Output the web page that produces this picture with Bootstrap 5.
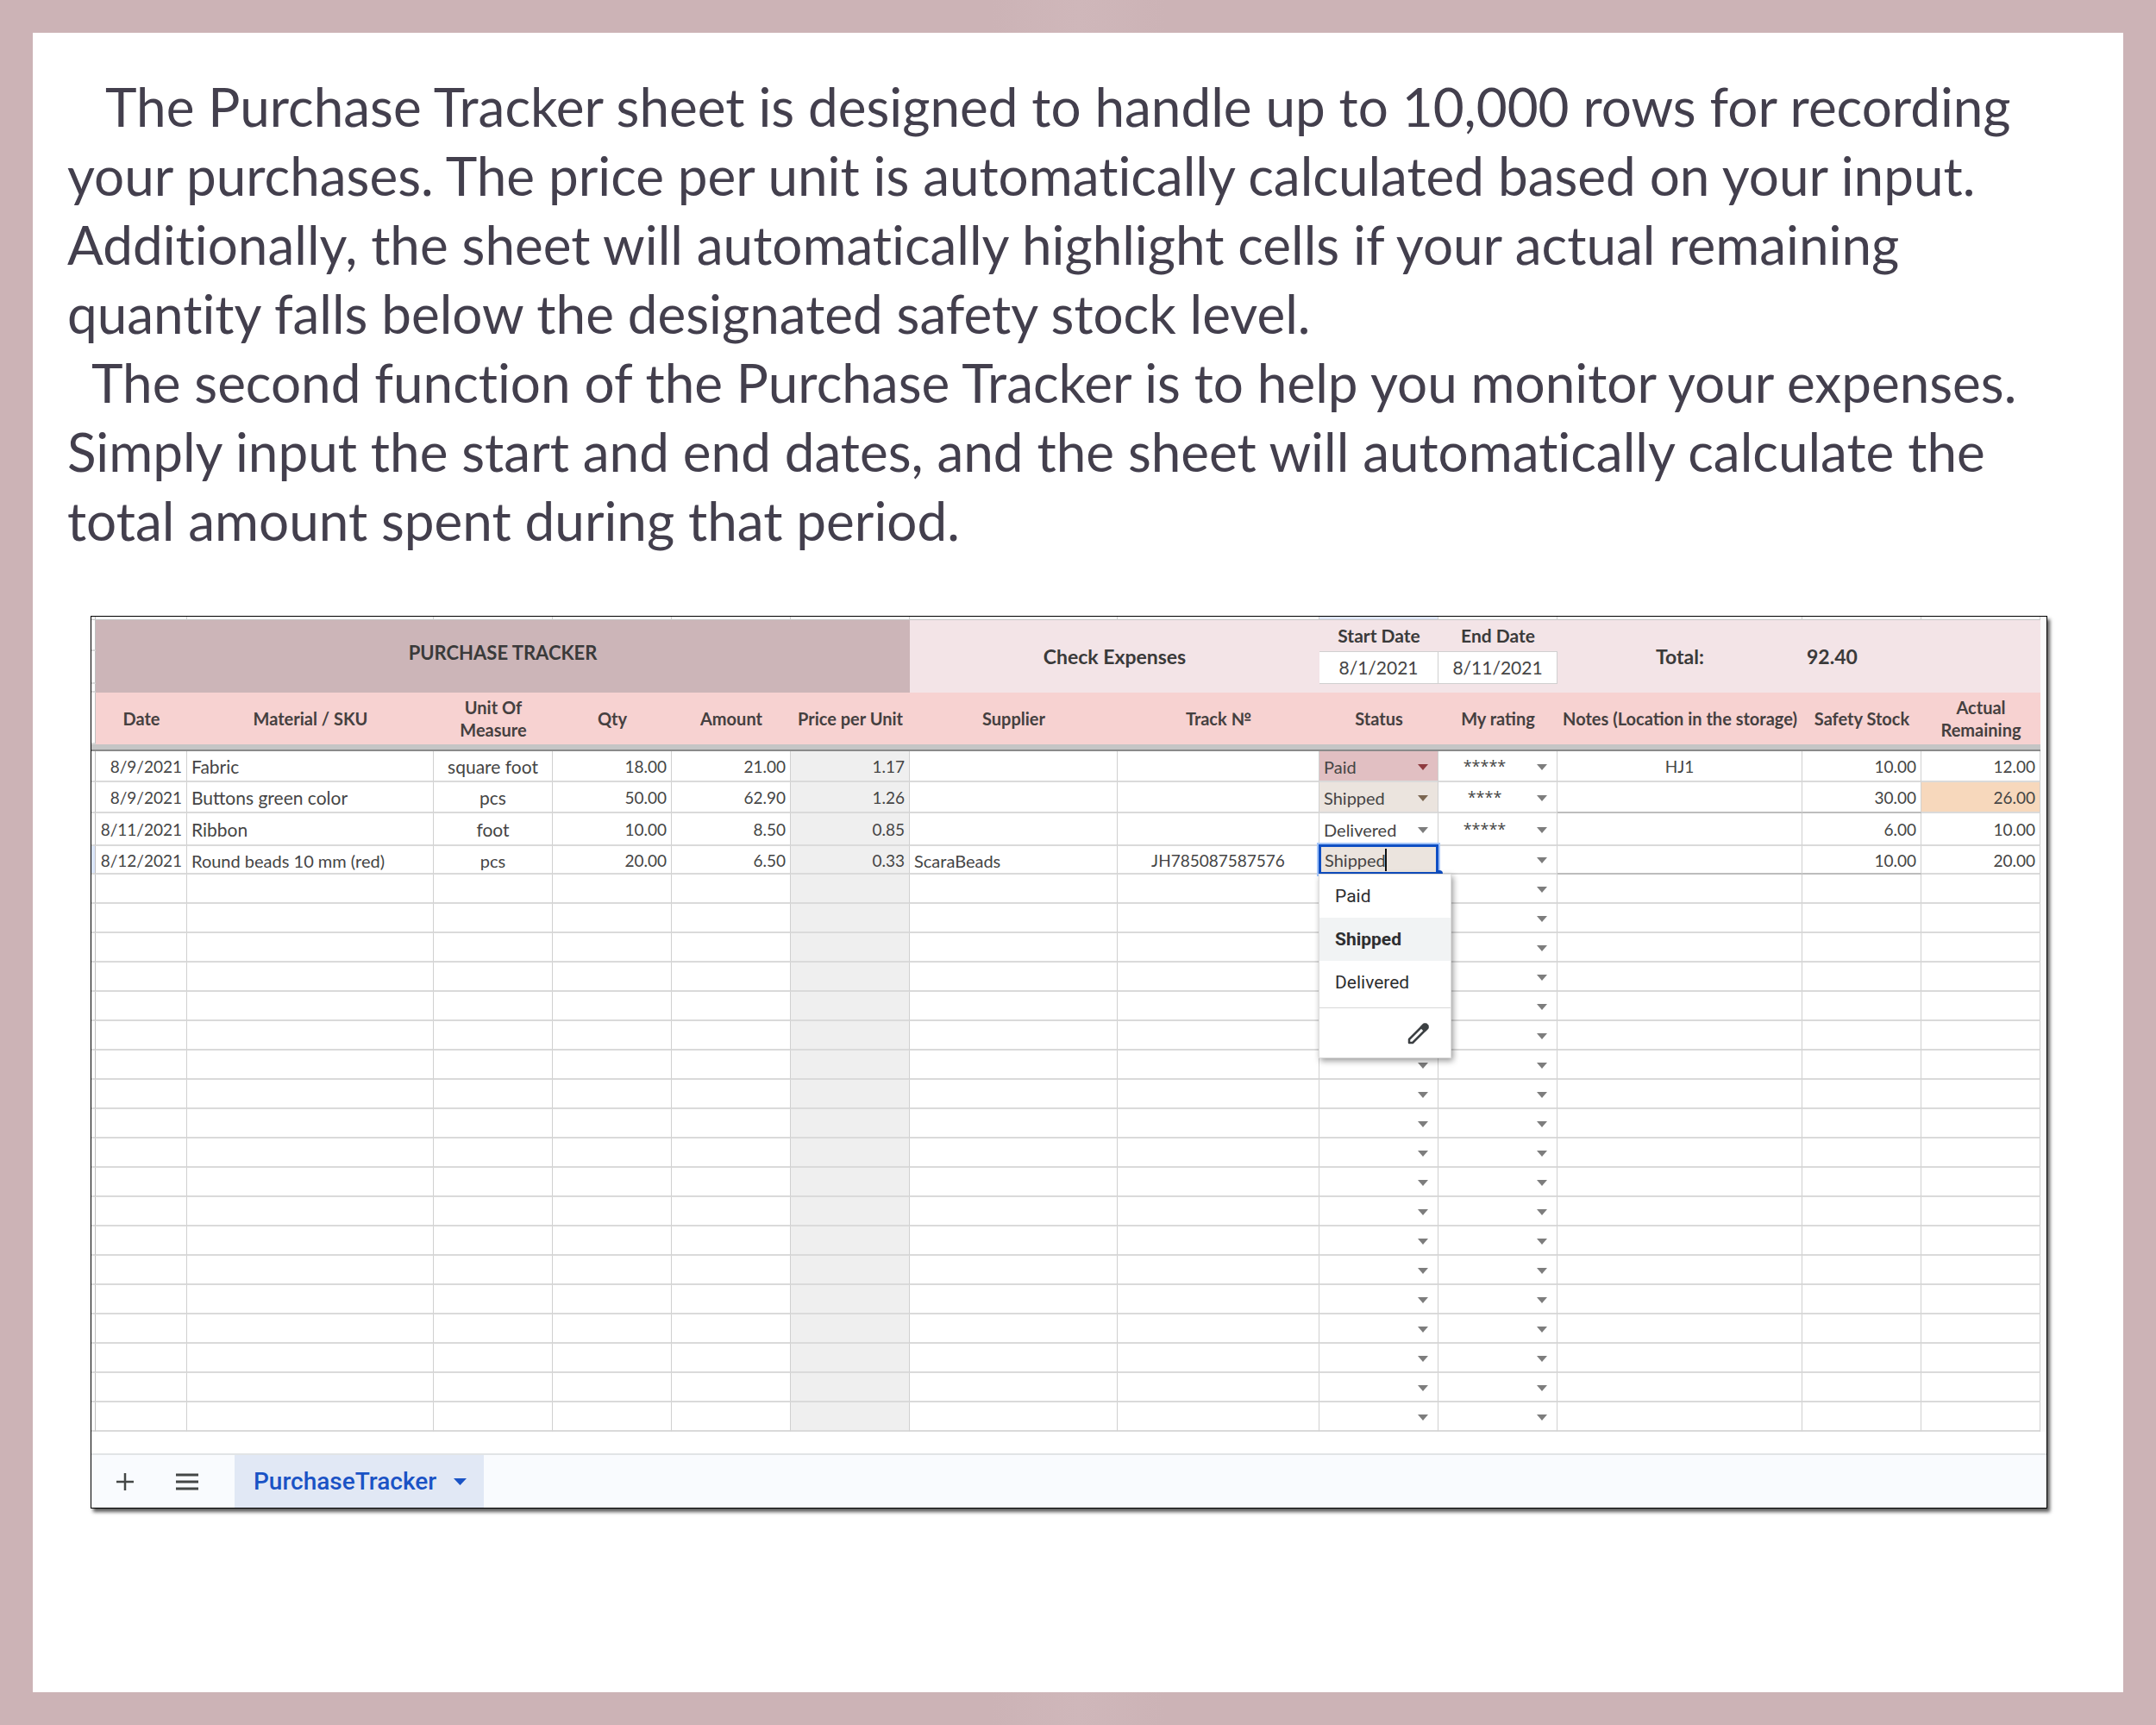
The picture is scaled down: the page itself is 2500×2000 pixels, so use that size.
<!DOCTYPE html>
<html lang="en">
<head>
<meta charset="utf-8">
<meta name="viewport" content="width=device-width, initial-scale=1">
<title>Purchase Tracker</title>
<link href="https://cdn.jsdelivr.net/npm/bootstrap@5.3.0/dist/css/bootstrap.min.css" rel="stylesheet">
<style>
  body {
    min-height: 100vh;
    padding: 38px;
    background: linear-gradient(90deg, #ccb3b6 46%, #cfb7ba 50%, #ccb3b6 54%);
    font-family: Lato, "Open Sans", sans-serif;
    color: #3c3c3c;
  }
  .page { min-height: calc(100vh - 76px); }
  .intro { padding: 45px 40px 71px; color: #433f4d; font-size: 62px; line-height: 80px; font-variant-ligatures: none; }
  .intro p { text-indent: 44px; }
  .intro p + p { text-indent: 28px; }

  .sheet { margin: 0 88px 0 67px; border: 1px solid #000; box-shadow: 3px 4px 4px rgba(0, 0, 0, .65); }

  /* grid */
  .ledger { table-layout: fixed; border-collapse: separate; border-spacing: 0; color: #454545; font-size: 19px; line-height: 26px; }
  .ledger > :not(caption) > * > * {
    height: 34px; padding: 0 5px; color: inherit; background: #fff; white-space: nowrap; vertical-align: middle;
    border: 0 solid #dadada; border-right: 1px solid #d0d0d0; border-bottom-width: 2px;
  }
  .ledger > tbody > tr > td { padding-top: 2px; }
  .ledger tr > :first-child { padding: 0; border-right-color: #c0c0c0; }
  .ledger tr > :last-child { padding: 0; border-right: 0; border-bottom-color: #fafafa; background: #fafafa; }
  .ledger .edge > * { height: 4px; border-bottom: 1px solid #c4c4c4; }
  .ledger .edge > .picked { background: #dfe6f9; }
  .ledger .band-a > .fill, .ledger .band-b > .fill, .ledger .band-c > .fill { border: 0; background: #f3e4e7; color: #3a3a3a; font-weight: 700; font-size: 23px; }
  .ledger .band-a > * { height: 36px; }
  .ledger .band-b > * { height: 38px; }
  .ledger .band-c > * { height: 10px; }
  .ledger .band-a > .banner { background: #ccb5b8; padding-bottom: 8px; font-size: 22px; }
  .ledger .band-a > .caption-cell { font-size: 21px; }
  .ledger .band-b > .date-cell { padding: 0; border: 1px solid #d0d0d0; border-left-width: 0; font-size: 21px; }
  .ledger .heads > * { height: 60px; font-size: 20px; font-weight: 700; text-align: center; }
  .ledger .heads > .fill { padding: 0; border: 0; background: #f7d2d1; color: #454040; }
  .ledger .frozen > * { height: 8px; padding: 0; border-right: 0; border-bottom: 2px solid #8a8a8a; background: #c5c5c5; }
  .ledger .h-36 > * { height: 36px; }
  .ledger .h-38 > * { height: 38px; }
  .ledger .h-33 > * { height: 33px; }
  .ledger .words { font-size: 21px; }
  .ledger .h-33 > .words { font-size: 20px; }
  .ledger .price { background: #efefef; }
  .ledger .low { background: #f7d8bc; }
  .ledger .paid { background: #e1bfc2; --tri: #8f3a3f; }
  .ledger .shipped { background: #ebe4de; --tri: #7b6651; }
  .ledger .ruled { border-bottom-color: #bdbdbd; }
  .ledger .rowpick { background: #dbe6fb; }

  .bare { width: 100%; min-width: 0; padding: 0; border: 0; outline: 0; background: transparent; color: inherit; font: inherit; appearance: none; }
  .pick { display: flex; align-items: center; padding-right: 6px; font-size: 20px; }
  .pick::after { content: ""; flex: none; border: 6px solid transparent; border-top: 7px solid var(--tri, #7d7d7d); border-bottom: 0; }
  .stars { font-family: "Open Sans", sans-serif; font-size: 18px; line-height: 24px; text-align: center; padding: 0 12px 2px 0; }

  /* cell being edited and its list */
  .editing { position: relative; }
  .editor { position: absolute; z-index: 2; inset: -2px -1px -2px -1px; padding-left: 4px; border: 3px solid #0f4fc4; background: #ebe4de; box-shadow: 0 0 0 2px #a5c5f8; font-size: 20px; }
  .editor::after { content: ""; position: absolute; right: -8px; bottom: -3px; width: 5px; height: 5px; background: #0f4fc4; border-top-right-radius: 4px; }
  .editor input { width: 70px; }
  .cursor { width: 2px; height: 26px; background: #111; }
  .choices { position: absolute; z-index: 3; top: calc(100% + 1px); left: -1px; width: 154px; background: #fff; border: 1px solid #ddd; box-shadow: 2px 3px 7px rgba(0, 0, 0, .4); font: 21px/50px Roboto, sans-serif; color: #2d2e30; }
  .choices button { display: block; width: 100%; padding: 0 18px; border: 0; background: none; color: inherit; font: inherit; text-align: left; }
  .choices .current { background: #f1f3f4; font-weight: 700; }
  .choices .foot { height: 58px; margin-top: 4px; padding-right: 24px; border-top: 1px solid #d8d8d8; }
  .choices .foot button { width: auto; padding: 0; line-height: 1; }

  /* tab bar */
  .tabs { margin-top: 25px; height: 63px; border-top: 2px solid #e1e4e6; background: #f9fbfe; padding-left: 28px; }
  .tabs button { border: 0; padding: 0; background: none; color: #444746; line-height: 1; }
  .tabs .active-tab { gap: 20px; margin-left: 42px; padding: 0 20px 0 22px; background: #e1e8f5; color: #1a53c5; font: 500 28px Roboto, sans-serif; }
</style>
</head>
<body>
<main class="page bg-white">
  <section class="intro">
    <p class="mb-0">The Purchase Tracker sheet is designed to handle up to 10,000 rows for recording<br>your purchases. The price per unit is automatically calculated based on your input.<br>Additionally, the sheet will automatically highlight cells if your actual remaining<br>quantity falls below the designated safety stock level.</p>
    <p class="mb-0">The second function of the Purchase Tracker is to help you monitor your expenses.<br>Simply input the start and end dates, and the sheet will automatically calculate the<br>total amount spent during that period.</p>
  </section>

  <section class="sheet bg-white">
    <table class="table ledger mb-0">
      <colgroup>
        <col style="width:5px"><col style="width:106px"><col style="width:286px"><col style="width:138px"><col style="width:138px"><col style="width:138px"><col style="width:138px"><col style="width:241px"><col style="width:234px"><col style="width:138px"><col style="width:138px"><col style="width:284px"><col style="width:138px"><col style="width:138px"><col style="width:7px">
      </colgroup>
      <thead>
        <tr class="edge"><td></td><td></td><td></td><td></td><td></td><td></td><td></td><td></td><td></td><td class="picked"></td><td></td><td></td><td></td><td></td><td></td></tr>
        <tr class="band-a">
          <td></td>
          <th class="fill banner text-center" colspan="6" rowspan="3">PURCHASE TRACKER</th>
          <th class="fill text-center" colspan="2" rowspan="3">Check Expenses</th>
          <th class="fill caption-cell text-center"><label for="start">Start Date</label></th>
          <th class="fill caption-cell text-center"><label for="end">End Date</label></th>
          <th class="fill text-center" rowspan="3">Total:</th>
          <th class="fill text-start" colspan="2" rowspan="3">92.40</th>
          <td></td>
        </tr>
        <tr class="band-b">
          <td></td>
          <td class="date-cell"><input class="bare text-center" id="start" value="8/1/2021"></td>
          <td class="date-cell"><input class="bare text-center" id="end" value="8/11/2021"></td>
          <td></td>
        </tr>
        <tr class="band-c"><td></td><td class="fill"></td><td class="fill"></td><td></td></tr>
        <tr class="heads">
          <td></td>
          <th class="fill">Date</th><th class="fill">Material / SKU</th><th class="fill">Unit Of<br>Measure</th><th class="fill">Qty</th><th class="fill">Amount</th><th class="fill">Price per Unit</th><th class="fill">Supplier</th><th class="fill">Track №</th><th class="fill">Status</th><th class="fill">My rating</th><th class="fill">Notes (Location in the storage)</th><th class="fill">Safety Stock</th><th class="fill">Actual<br>Remaining</th>
          <td></td>
        </tr>
        <tr class="frozen"><td colspan="14"></td><td></td></tr>
      </thead>
      <tbody id="rows">
        <tr class="h-36">
          <td></td><td class="text-end">8/9/2021</td><td class="words">Fabric</td><td class="text-center words">square foot</td><td class="text-end">18.00</td><td class="text-end">21.00</td><td class="text-end price">1.17</td><td></td><td></td>
          <td class="paid"><div class="pick"><select class="bare" aria-label="Status"><option>Paid</option></select></div></td>
          <td><div class="pick"><select class="bare stars" aria-label="My rating"><option>*****</option></select></div></td>
          <td class="text-center">HJ1</td><td class="text-end">10.00</td><td class="text-end">12.00</td><td></td>
        </tr>
        <tr class="h-36">
          <td></td><td class="text-end">8/9/2021</td><td class="words">Buttons green color</td><td class="text-center words">pcs</td><td class="text-end">50.00</td><td class="text-end">62.90</td><td class="text-end price">1.26</td><td></td><td></td>
          <td class="shipped"><div class="pick"><select class="bare" aria-label="Status"><option>Shipped</option></select></div></td>
          <td><div class="pick"><select class="bare stars" aria-label="My rating"><option>****</option></select></div></td>
          <td class="ruled"></td><td class="text-end ruled">30.00</td><td class="text-end low">26.00</td><td></td>
        </tr>
        <tr class="h-38">
          <td></td><td class="text-end">8/11/2021</td><td class="words">Ribbon</td><td class="text-center words">foot</td><td class="text-end">10.00</td><td class="text-end">8.50</td><td class="text-end price">0.85</td><td></td><td></td>
          <td><div class="pick"><select class="bare" aria-label="Status"><option>Delivered</option></select></div></td>
          <td><div class="pick"><select class="bare stars" aria-label="My rating"><option>*****</option></select></div></td>
          <td></td><td class="text-end">6.00</td><td class="text-end">10.00</td><td></td>
        </tr>
        <tr class="h-33">
          <td class="rowpick"></td><td class="text-end">8/12/2021</td><td class="words">Round beads 10 mm (red)</td><td class="text-center words">pcs</td><td class="text-end">20.00</td><td class="text-end">6.50</td><td class="text-end price">0.33</td><td class="words">ScaraBeads</td><td class="text-center">JH785087587576</td>
          <td class="editing">
            <div class="editor d-flex align-items-center"><input class="bare" aria-label="Status" value="Shipped"><span class="cursor"></span></div>
            <div class="choices">
              <button type="button">Paid</button>
              <button type="button" class="current">Shipped</button>
              <button type="button">Delivered</button>
              <div class="foot d-flex align-items-center justify-content-end">
                <button type="button" aria-label="Edit list"><svg width="26" height="26" viewBox="0 0 26 26" fill="none" stroke="#3c4043" stroke-width="2.500" stroke-linejoin="round"><path d="M2 24v-4L19 3l4 4L6 24z"/><path d="M16 6l4 4 3.500-3.500v-2l-2-2h-2z" fill="#3c4043"/></svg></button>
              </div>
            </div>
          </td>
          <td><div class="pick"><select class="bare stars" aria-label="My rating"><option></option></select></div></td>
          <td class="ruled"></td><td class="text-end ruled">10.00</td><td class="text-end">20.00</td><td></td>
        </tr>
      </tbody>
    </table>

    <template id="blank">
      <tr>
        <td></td><td></td><td></td><td></td><td></td><td></td><td class="price"></td><td></td><td></td>
        <td><div class="pick"><select class="bare" aria-label="Status"><option></option></select></div></td>
        <td><div class="pick"><select class="bare stars" aria-label="My rating"><option></option></select></div></td>
        <td></td><td></td><td></td><td></td>
      </tr>
    </template>

    <nav class="tabs d-flex align-items-stretch">
      <button type="button" aria-label="Add sheet"><svg width="22" height="22" viewBox="0 0 22 22" stroke="#444746" stroke-width="2.500"><path d="M11 1v20M1 11h20"/></svg></button>
      <button type="button" class="ms-5" aria-label="All sheets"><svg width="26" height="20" viewBox="0 0 26 20" stroke="#444746" stroke-width="3"><path d="M0 2h26M0 10h26M0 18h26"/></svg></button>
      <button type="button" class="active-tab d-flex align-items-center">PurchaseTracker<svg width="15" height="8" viewBox="0 0 15 8" fill="#1a53c5"><path d="M0 0h15L7.500 8z"/></svg></button>
    </nav>
  </section>
</main>
<script src="https://cdn.jsdelivr.net/npm/bootstrap@5.3.0/dist/js/bootstrap.bundle.min.js"></script>
<script>
  const body = document.getElementById('rows');
  const blank = document.getElementById('blank');
  for (let i = 0; i < 19; i++) body.append(blank.content.cloneNode(true));
</script>
</body>
</html>
